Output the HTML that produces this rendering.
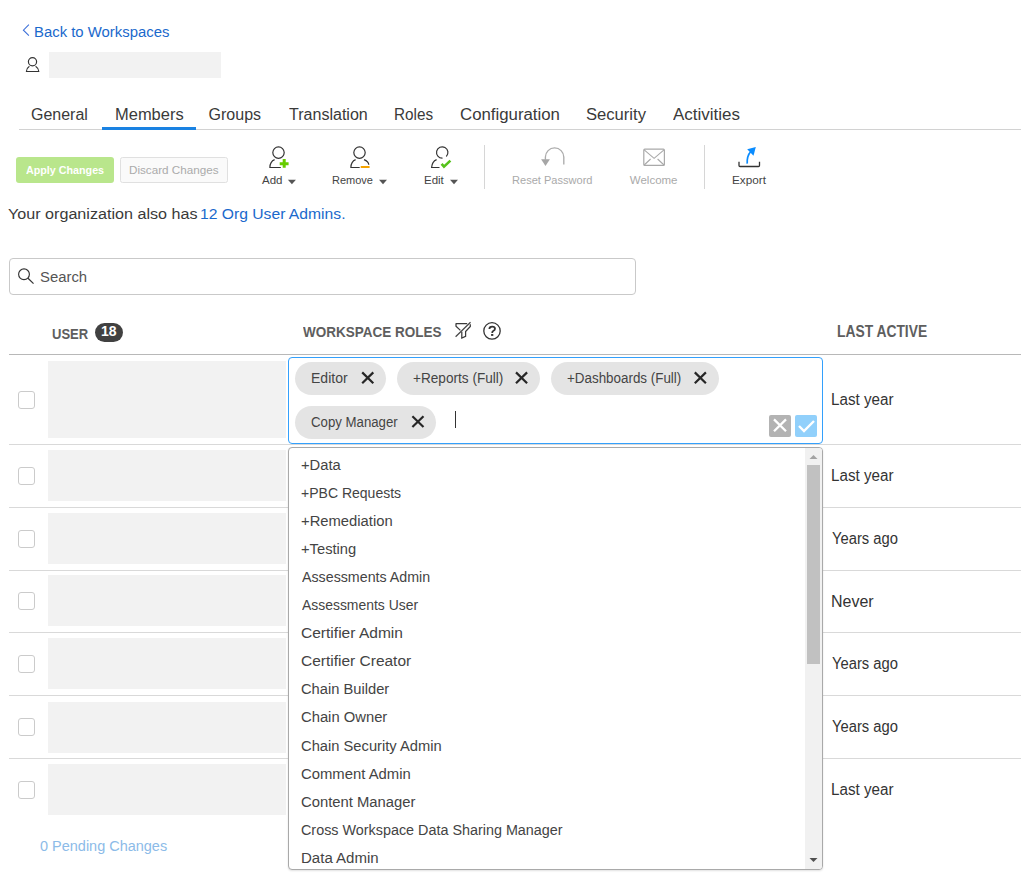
<!DOCTYPE html>
<html><head><meta charset="utf-8">
<style>
html,body{margin:0;padding:0;background:#fff;}
body{width:1021px;height:877px;position:relative;overflow:hidden;font-family:"Liberation Sans",sans-serif;color:#444;}
.a{position:absolute;}
.t{position:absolute;white-space:nowrap;line-height:1;}
.box{position:absolute;background:#f2f2f2;left:48px;width:238px;}
.hl{position:absolute;height:1px;background:#d9d9d9;left:9px;width:1012px;}
.cb{position:absolute;left:18px;width:15px;height:16px;border:1px solid #cbcbcb;border-radius:3px;background:#fff;}
.chip{position:absolute;height:33px;background:#e4e4e4;border-radius:16.5px;}
svg.full{position:absolute;left:0;top:0;}
</style></head>
<body>
<!-- page shapes -->
<div class="a" style="left:49px;top:52px;width:172px;height:26px;background:#f2f2f2;"></div>
<div class="a" style="left:19px;top:129px;width:1002px;height:1px;background:#d2d2d2;"></div>
<div class="a" style="left:102px;top:127px;width:94px;height:3px;background:#1a82e2;"></div>
<div class="a" style="left:16px;top:157px;width:98px;height:26px;background:#b9e68c;border-radius:3px;"></div>
<div class="a" style="left:120px;top:157px;width:106px;height:24px;border:1px solid #e0e0e0;border-radius:2.5px;background:#fafafa;"></div>
<div class="a" style="left:484px;top:145px;width:1px;height:44px;background:#d6d6d6;"></div>
<div class="a" style="left:704px;top:145px;width:1px;height:44px;background:#d6d6d6;"></div>
<div class="a" style="left:9px;top:258px;width:625px;height:35px;border:1px solid #c9c9c9;border-radius:4px;"></div>
<div class="a" style="left:95px;top:323px;width:28px;height:19px;border-radius:9.5px;background:#414141;"></div>
<div class="a" style="left:9px;top:354px;width:1012px;height:1px;background:#b8b8b8;"></div>

<!-- rows -->
<div class="box" style="top:361px;height:77px;"></div>
<div class="cb" style="top:391px;"></div>
<div class="hl" style="top:444px;"></div>
<div class="box" style="top:450px;height:51px;"></div>
<div class="cb" style="top:467px;"></div>
<div class="hl" style="top:507px;"></div>
<div class="box" style="top:513px;height:51px;"></div>
<div class="cb" style="top:530px;"></div>
<div class="hl" style="top:570px;"></div>
<div class="box" style="top:575px;height:51px;"></div>
<div class="cb" style="top:592px;"></div>
<div class="hl" style="top:632px;"></div>
<div class="box" style="top:638px;height:51px;"></div>
<div class="cb" style="top:655px;"></div>
<div class="hl" style="top:695px;"></div>
<div class="box" style="top:702px;height:51px;"></div>
<div class="cb" style="top:718px;"></div>
<div class="hl" style="top:758px;"></div>
<div class="box" style="top:764px;height:51px;"></div>
<div class="cb" style="top:781px;"></div>

<!-- editor box -->
<div class="a" style="left:288px;top:357px;width:533px;height:85px;border:1px solid #33a0fc;border-radius:4px;background:#fff;"></div>
<div class="chip" style="left:295px;top:362px;width:91px;"></div>
<div class="chip" style="left:397px;top:362px;width:143px;"></div>
<div class="chip" style="left:551px;top:362px;width:168px;"></div>
<div class="chip" style="left:295px;top:406px;width:141px;"></div>
<div class="a" style="left:455px;top:411px;width:1px;height:17px;background:#333;"></div>
<div class="a" style="left:769px;top:415px;width:22px;height:22px;background:#b3b3b3;border-radius:2px;"></div>
<div class="a" style="left:795px;top:415px;width:22px;height:22px;background:#91d0fb;border-radius:2px;"></div>

<!-- dropdown -->
<div class="a" style="left:288px;top:447px;width:533px;height:421px;border:1px solid #a9a9a9;border-radius:4px;background:#fff;box-shadow:0 1px 2px rgba(0,0,0,0.12);overflow:hidden;"><div class="a" style="left:516px;top:0;width:17px;height:421px;background:#f1f1f1;"></div><div class="a" style="left:518px;top:17px;width:13px;height:199px;background:#c1c1c1;"></div></div>

<svg class="full" width="1021" height="877" viewBox="0 0 1021 877">
 <!-- chevron -->
 <path d="M28.9 24.6 L23.4 30.2 L28.9 35.7" fill="none" stroke="#3b6fd8" stroke-width="1.05"/>
 <!-- header user icon -->
 <circle cx="32.5" cy="61.7" r="4.1" fill="none" stroke="#333" stroke-width="1.2"/>
 <path d="M29.4 66.2 Q26.6 68 26.4 71.5 L38.8 71.5 Q38.5 68 35.6 66.2" fill="none" stroke="#333" stroke-width="1.1"/>
 <!-- add -->
 <circle cx="278.5" cy="152.6" r="5.7" fill="none" stroke="#333" stroke-width="1.2"/>
 <path d="M274.6 159.6 Q270 161.5 269.9 167.5 L280.8 167.5" fill="none" stroke="#333" stroke-width="1.2"/>
 <path d="M284.2 159.1 V167.8 M279.7 163.7 H288.6" fill="none" stroke="#66cc00" stroke-width="3"/>
 <path d="M287.9 179.8 L295.9 179.8 L291.9 184.2 Z" fill="#555"/>
 <!-- remove -->
 <circle cx="359.5" cy="152.6" r="5.7" fill="none" stroke="#333" stroke-width="1.2"/>
 <path d="M355.6 159.6 Q351 161.5 350.9 167.5 L359.7 167.5 M364 159.6 Q368.6 161.5 368.8 164.8" fill="none" stroke="#333" stroke-width="1.2"/>
 <path d="M360.7 167 H369.6" fill="none" stroke="#f5a300" stroke-width="2"/>
 <path d="M379 179.8 L387 179.8 L383 184.2 Z" fill="#555"/>
 <!-- edit -->
 <path d="M446.3 156.5 A5.7 5.7 0 1 0 442.5 158.2" fill="none" stroke="#333" stroke-width="1.2"/>
 <path d="M436.6 159.6 Q432 161.5 431.6 167.5 L439.5 167.5" fill="none" stroke="#333" stroke-width="1.2"/>
 <path d="M441.6 163.8 L444 166.6 L450.4 160.6" fill="none" stroke="#55c21b" stroke-width="2.6"/>
 <path d="M450 179.8 L458 179.8 L454 184.2 Z" fill="#555"/>
 <!-- reset -->
 <path d="M563.8 164.5 V157.1 A9.2 9.2 0 0 0 545.4 157.1 V159.8" fill="none" stroke="#acacac" stroke-width="1.35"/>
 <path d="M541.1 159.3 L549.9 159.3 L545.5 166.1 Z" fill="#a6a6a6"/>
 <!-- welcome -->
 <rect x="643.8" y="149.2" width="20.6" height="16.2" rx="1" fill="none" stroke="#a9a9a9" stroke-width="1.2"/>
 <path d="M644.2 149.8 L654.1 158.3 L664 149.8 M644.2 165 L650.6 159 M664 165 L657.6 159" fill="none" stroke="#a9a9a9" stroke-width="1.1"/>
 <!-- export -->
 <path d="M739 161.7 V165.5 Q739 166.5 740 166.5 H758.5 Q759.5 166.5 759.5 165.5 V161.7" fill="none" stroke="#333" stroke-width="1.3"/>
 <path d="M747.2 163.6 Q746.8 156 750.6 151.8" fill="none" stroke="#0a8cff" stroke-width="1.7"/>
 <path d="M747.2 149.2 L755.8 147.1 L753.5 155.7 Z" fill="#0a8cff"/>
 <!-- search -->
 <circle cx="24" cy="274.3" r="5.4" fill="none" stroke="#333" stroke-width="1.15"/>
 <path d="M28 278.3 L33.5 283.6" fill="none" stroke="#333" stroke-width="1.2"/>
 <!-- filter -->
 <path d="M456 323.6 H467.2 M456 323.2 V326.2 L460.4 330.4 M461.8 331.8 V338 L465.6 336.4 V331.6 L470.3 326.4 V324.3" fill="none" stroke="#3a3a3a" stroke-width="1.25" stroke-linejoin="miter"/>
 <path d="M455.6 336.8 L470.5 322.3" fill="none" stroke="#444" stroke-width="1.2"/>
 <!-- help -->
 <circle cx="492" cy="330.9" r="8.2" fill="none" stroke="#333" stroke-width="1.3"/>
 <path d="M489.4 329.0 Q489.4 326.6 492.2 326.6 Q495 326.6 495 328.8 Q495 330.3 493.2 331 Q492.2 331.5 492.2 333" fill="none" stroke="#333" stroke-width="1.8"/>
 <rect x="491.1" y="334" width="2.2" height="1.9" fill="#333"/>
 <!-- chip x -->
 <path d="M362.2 372.4 L373.3 383.2 M373.3 372.4 L362.2 383.2" stroke="#262626" stroke-width="2.2"/>
 <path d="M516 372.4 L527.1 383.2 M527.1 372.4 L516 383.2" stroke="#262626" stroke-width="2.2"/>
 <path d="M694.8 372.4 L705.9 383.2 M705.9 372.4 L694.8 383.2" stroke="#262626" stroke-width="2.2"/>
 <path d="M412.4 416.2 L423.5 427 M423.5 416.2 L412.4 427" stroke="#262626" stroke-width="2.2"/>
 <!-- editor btns -->
 <path d="M774 419.4 L786 431.2 M786 419.4 L774 431.2" stroke="#fff" stroke-width="2.3"/>
 <path d="M799 426 L804 431 L814 421" fill="none" stroke="#fff" stroke-width="2.4"/>
 <!-- scroll arrows -->
 <path d="M809.5 459 L817.5 459 L813.5 455 Z" fill="#a3a3a3"/>
 <path d="M809.5 858 L817.5 858 L813.5 862 Z" fill="#505050"/>
</svg>
<div class="t" id="back" style="left:34.20px;top:24.25px;font-size:15.50px;letter-spacing:0.000px;font-weight:400;color:#1a69cc;transform:scaleX(0.9606);transform-origin:0 0;">Back to Workspaces</div>
<div class="t" id="tab_General" style="left:31.00px;top:107.40px;font-size:16.00px;letter-spacing:0.000px;font-weight:400;color:#3a3a3a;transform:scaleX(0.9987);transform-origin:0 0;">General</div>
<div class="t" id="tab_Members" style="left:114.80px;top:107.40px;font-size:16.00px;letter-spacing:0.000px;font-weight:400;color:#3a3a3a;transform:scaleX(1.0292);transform-origin:0 0;">Members</div>
<div class="t" id="tab_Groups" style="left:208.60px;top:107.40px;font-size:16.00px;letter-spacing:0.000px;font-weight:400;color:#3a3a3a;transform:scaleX(1.0000);transform-origin:0 0;">Groups</div>
<div class="t" id="tab_Translation" style="left:288.50px;top:107.40px;font-size:16.00px;letter-spacing:0.000px;font-weight:400;color:#3a3a3a;transform:scaleX(1.0028);transform-origin:0 0;">Translation</div>
<div class="t" id="tab_Roles" style="left:394.00px;top:107.40px;font-size:16.00px;letter-spacing:0.000px;font-weight:400;color:#3a3a3a;transform:scaleX(0.9550);transform-origin:0 0;">Roles</div>
<div class="t" id="tab_Configuration" style="left:460.00px;top:107.40px;font-size:16.00px;letter-spacing:0.000px;font-weight:400;color:#3a3a3a;transform:scaleX(1.0495);transform-origin:0 0;">Configuration</div>
<div class="t" id="tab_Security" style="left:586.00px;top:107.40px;font-size:16.00px;letter-spacing:0.000px;font-weight:400;color:#3a3a3a;transform:scaleX(1.0368);transform-origin:0 0;">Security</div>
<div class="t" id="tab_Activities" style="left:672.80px;top:107.40px;font-size:16.00px;letter-spacing:0.000px;font-weight:400;color:#3a3a3a;transform:scaleX(1.0619);transform-origin:0 0;">Activities</div>
<div class="t" id="apply" style="left:25.60px;top:165.20px;font-size:11.50px;letter-spacing:0.000px;font-weight:700;color:#ffffff;transform:scaleX(0.9325);transform-origin:0 0;">Apply Changes</div>
<div class="t" id="discard" style="left:129.30px;top:165.20px;font-size:11.50px;letter-spacing:0.000px;font-weight:400;color:#ababab;transform:scaleX(1.0154);transform-origin:0 0;">Discard Changes</div>
<div class="t" id="add" style="left:262.00px;top:175.40px;font-size:11.50px;letter-spacing:0.000px;font-weight:400;color:#444;transform:scaleX(1.0000);transform-origin:0 0;">Add</div>
<div class="t" id="remove" style="left:332.00px;top:175.40px;font-size:11.50px;letter-spacing:0.000px;font-weight:400;color:#444;transform:scaleX(0.9574);transform-origin:0 0;">Remove</div>
<div class="t" id="edit" style="left:424.00px;top:175.40px;font-size:11.50px;letter-spacing:0.000px;font-weight:400;color:#444;transform:scaleX(1.0000);transform-origin:0 0;">Edit</div>
<div class="t" id="reset" style="left:512.00px;top:174.80px;font-size:11.50px;letter-spacing:0.000px;font-weight:400;color:#aaaaaa;transform:scaleX(0.9616);transform-origin:0 0;">Reset Password</div>
<div class="t" id="welcome" style="left:629.80px;top:174.80px;font-size:11.50px;letter-spacing:0.000px;font-weight:400;color:#aaaaaa;transform:scaleX(1.0000);transform-origin:0 0;">Welcome</div>
<div class="t" id="export" style="left:732.00px;top:174.80px;font-size:11.50px;letter-spacing:0.000px;font-weight:400;color:#444;transform:scaleX(1.0219);transform-origin:0 0;">Export</div>
<div class="t" id="org" style="left:8.00px;top:205.85px;font-size:15.50px;letter-spacing:0.000px;font-weight:400;color:#3a3a3a;transform:scaleX(1.0409);transform-origin:0 0;">Your organization also has</div>
<div class="t" id="org2" style="left:200.00px;top:205.85px;font-size:15.50px;letter-spacing:0.000px;font-weight:400;color:#1a69cc;transform:scaleX(1.0113);transform-origin:0 0;">12 Org User Admins.</div>
<div class="t" id="search" style="left:40.40px;top:269.05px;font-size:15.50px;letter-spacing:0.000px;font-weight:400;color:#555;transform:scaleX(0.9588);transform-origin:0 0;">Search</div>
<div class="t" id="user" style="left:52.00px;top:325.85px;font-size:15.50px;letter-spacing:0.000px;font-weight:700;color:#5e5e5e;transform:scaleX(0.8405);transform-origin:0 0;">USER</div>
<div class="t" id="badge" style="left:101.00px;top:324.15px;font-size:14.00px;letter-spacing:0.000px;font-weight:700;color:#fff;transform:scaleX(1.0000);transform-origin:0 0;">18</div>
<div class="t" id="wroles" style="left:303.00px;top:324.25px;font-size:15.50px;letter-spacing:0.000px;font-weight:700;color:#5e5e5e;transform:scaleX(0.8711);transform-origin:0 0;">WORKSPACE ROLES</div>
<div class="t" id="lastact" style="left:836.80px;top:324.25px;font-size:16.00px;letter-spacing:0.000px;font-weight:700;color:#5e5e5e;transform:scaleX(0.8641);transform-origin:0 0;">LAST ACTIVE</div>
<div class="t" id="la0" style="left:831.00px;top:392.25px;font-size:16.00px;letter-spacing:0.000px;font-weight:400;color:#333;transform:scaleX(0.9492);transform-origin:0 0;">Last year</div>
<div class="t" id="la1" style="left:831.00px;top:467.85px;font-size:16.00px;letter-spacing:0.000px;font-weight:400;color:#333;transform:scaleX(0.9492);transform-origin:0 0;">Last year</div>
<div class="t" id="la2" style="left:832.00px;top:530.85px;font-size:16.00px;letter-spacing:0.000px;font-weight:400;color:#333;transform:scaleX(0.9232);transform-origin:0 0;">Years ago</div>
<div class="t" id="la3" style="left:831.00px;top:593.85px;font-size:16.00px;letter-spacing:0.000px;font-weight:400;color:#333;transform:scaleX(1.0000);transform-origin:0 0;">Never</div>
<div class="t" id="la4" style="left:832.00px;top:655.65px;font-size:16.00px;letter-spacing:0.000px;font-weight:400;color:#333;transform:scaleX(0.9232);transform-origin:0 0;">Years ago</div>
<div class="t" id="la5" style="left:832.00px;top:719.25px;font-size:16.00px;letter-spacing:0.000px;font-weight:400;color:#333;transform:scaleX(0.9232);transform-origin:0 0;">Years ago</div>
<div class="t" id="la6" style="left:831.00px;top:782.25px;font-size:16.00px;letter-spacing:0.000px;font-weight:400;color:#333;transform:scaleX(0.9492);transform-origin:0 0;">Last year</div>
<div class="t" id="pending" style="left:40.00px;top:837.65px;font-size:15.50px;letter-spacing:0.000px;font-weight:400;color:#8cbbe8;transform:scaleX(0.9339);transform-origin:0 0;">0 Pending Changes</div>
<div class="t" id="chip1" style="left:310.80px;top:370.50px;font-size:14.00px;letter-spacing:0.000px;font-weight:400;color:#444;transform:scaleX(1.0008);transform-origin:0 0;">Editor</div>
<div class="t" id="chip2" style="left:413.20px;top:370.50px;font-size:14.00px;letter-spacing:0.000px;font-weight:400;color:#444;transform:scaleX(0.9721);transform-origin:0 0;">+Reports (Full)</div>
<div class="t" id="chip3" style="left:567.20px;top:370.50px;font-size:14.00px;letter-spacing:0.000px;font-weight:400;color:#444;transform:scaleX(0.9568);transform-origin:0 0;">+Dashboards (Full)</div>
<div class="t" id="chip4" style="left:310.90px;top:415.10px;font-size:14.00px;letter-spacing:0.000px;font-weight:400;color:#444;transform:scaleX(0.9443);transform-origin:0 0;">Copy Manager</div>
<div class="t" id="dd0" style="left:301.20px;top:457.25px;font-size:15.50px;letter-spacing:0.000px;font-weight:400;color:#444;transform:scaleX(0.9507);transform-origin:0 0;">+Data</div>
<div class="t" id="dd1" style="left:301.20px;top:485.25px;font-size:15.50px;letter-spacing:0.000px;font-weight:400;color:#444;transform:scaleX(0.9044);transform-origin:0 0;">+PBC Requests</div>
<div class="t" id="dd2" style="left:301.20px;top:513.25px;font-size:15.50px;letter-spacing:0.000px;font-weight:400;color:#444;transform:scaleX(0.9544);transform-origin:0 0;">+Remediation</div>
<div class="t" id="dd3" style="left:301.20px;top:540.85px;font-size:15.50px;letter-spacing:0.000px;font-weight:400;color:#444;transform:scaleX(0.9492);transform-origin:0 0;">+Testing</div>
<div class="t" id="dd4" style="left:302.00px;top:568.85px;font-size:15.50px;letter-spacing:0.000px;font-weight:400;color:#444;transform:scaleX(0.9182);transform-origin:0 0;">Assessments Admin</div>
<div class="t" id="dd5" style="left:302.00px;top:597.25px;font-size:15.50px;letter-spacing:0.000px;font-weight:400;color:#444;transform:scaleX(0.8981);transform-origin:0 0;">Assessments User</div>
<div class="t" id="dd6" style="left:301.20px;top:624.85px;font-size:15.50px;letter-spacing:0.000px;font-weight:400;color:#444;transform:scaleX(1.0030);transform-origin:0 0;">Certifier Admin</div>
<div class="t" id="dd7" style="left:301.20px;top:653.25px;font-size:15.50px;letter-spacing:0.000px;font-weight:400;color:#444;transform:scaleX(0.9995);transform-origin:0 0;">Certifier Creator</div>
<div class="t" id="dd8" style="left:301.20px;top:681.05px;font-size:15.50px;letter-spacing:0.000px;font-weight:400;color:#444;transform:scaleX(0.9485);transform-origin:0 0;">Chain Builder</div>
<div class="t" id="dd9" style="left:301.20px;top:708.65px;font-size:15.50px;letter-spacing:0.000px;font-weight:400;color:#444;transform:scaleX(0.9539);transform-origin:0 0;">Chain Owner</div>
<div class="t" id="dd10" style="left:301.20px;top:738.45px;font-size:15.50px;letter-spacing:0.000px;font-weight:400;color:#444;transform:scaleX(0.9494);transform-origin:0 0;">Chain Security Admin</div>
<div class="t" id="dd11" style="left:301.20px;top:765.85px;font-size:15.50px;letter-spacing:0.000px;font-weight:400;color:#444;transform:scaleX(0.9577);transform-origin:0 0;">Comment Admin</div>
<div class="t" id="dd12" style="left:301.20px;top:794.05px;font-size:15.50px;letter-spacing:0.000px;font-weight:400;color:#444;transform:scaleX(0.9558);transform-origin:0 0;">Content Manager</div>
<div class="t" id="dd13" style="left:301.20px;top:822.25px;font-size:15.50px;letter-spacing:0.000px;font-weight:400;color:#444;transform:scaleX(0.9267);transform-origin:0 0;">Cross Workspace Data Sharing Manager</div>
<div class="t" id="dd14" style="left:301.00px;top:849.65px;font-size:15.50px;letter-spacing:0.000px;font-weight:400;color:#444;transform:scaleX(0.9692);transform-origin:0 0;">Data Admin</div>
</body></html>
